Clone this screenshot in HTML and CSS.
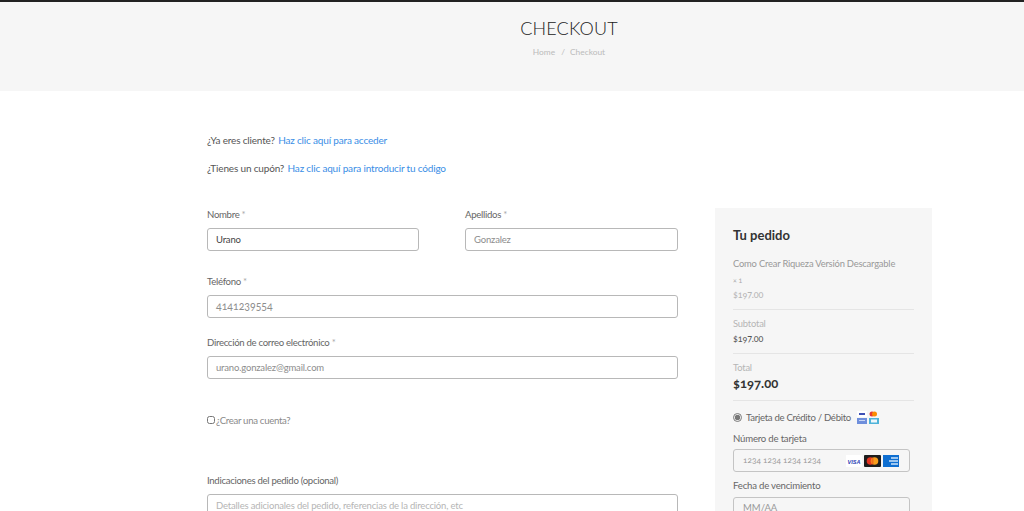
FILE: index.html
```html
<!DOCTYPE html>
<html lang="es">
<head>
<meta charset="utf-8">
<title>Checkout</title>
<link rel="stylesheet" href="styles.css">
</head>
<body>
<header class="hero">
  <h1 class="hero-title">CHECKOUT</h1>
  <nav class="crumbs"><span>Home</span><span class="crumb-sep">/</span><span>Checkout</span></nav>
</header>
<main class="page">
  <p class="notice notice-first">¿Ya eres cliente? <a href="#">Haz clic aquí para acceder</a></p>
  <p class="notice notice-second">¿Tienes un cupón? <a href="#">Haz clic aquí para introducir tu código</a></p>
  <div class="columns">
    <form class="billing">
      <div class="row row-names">
        <div class="field">
          <label class="label">Nombre <span class="req">*</span></label>
          <div class="input input-filled">Urano</div>
        </div>
        <div class="field">
          <label class="label">Apellidos <span class="req">*</span></label>
          <div class="input">Gonzalez</div>
        </div>
      </div>
      <div class="field field-phone">
        <label class="label">Teléfono <span class="req">*</span></label>
        <div class="input input-phone">4141239554</div>
      </div>
      <div class="field field-email">
        <label class="label">Dirección de correo electrónico <span class="req">*</span></label>
        <div class="input">urano.gonzalez@gmail.com</div>
      </div>
      <label class="account"><input type="checkbox" class="account-check"><span>¿Crear una cuenta?</span></label>
      <div class="field field-notes">
        <label class="label">Indicaciones del pedido (opcional)</label>
        <div class="input input-notes">Detalles adicionales del pedido, referencias de la dirección, etc</div>
      </div>
    </form>
    <aside class="order">
      <h2 class="order-title">Tu pedido</h2>
      <div class="order-item">Como Crear Riqueza Versión Descargable</div>
      <div class="order-qty">× 1</div>
      <div class="order-price">$197.00</div>
      <div class="order-block">
        <div class="order-key">Subtotal</div>
        <div class="order-sub">$197.00</div>
      </div>
      <div class="order-block">
        <div class="order-key">Total</div>
        <div class="order-total">$197.00</div>
      </div>
      <div class="pay">
        <div class="pay-method">
          <input type="radio" class="pay-radio" checked>
          <span>Tarjeta de Crédito / Débito</span>
          <svg class="pay-icons" width="22" height="13" viewBox="0 0 22 13">
            <rect x="0" y="0" width="10" height="6" fill="#fff"/>
            <rect x="2" y="2" width="6" height="2" fill="#3f51b5"/>
            <circle cx="15" cy="3" r="2.500" fill="#e53935"/>
            <circle cx="17.500" cy="3" r="2.500" fill="#fb8c00"/>
            <rect x="0" y="7" width="10" height="6" fill="#6f8fdc"/>
            <rect x="2" y="9" width="6" height="1" fill="#c9d6f5"/>
            <rect x="12" y="7" width="10" height="6" fill="#4fb3d9"/>
            <rect x="14" y="8.500" width="6" height="3" fill="#eef7fb"/>
          </svg>
        </div>
        <div class="pay-label">Número de tarjeta</div>
        <div class="pay-input pay-card">
          <span class="pay-digits">1234 1234 1234 1234</span>
          <span class="cards">
            <svg width="16" height="12" viewBox="0 0 16 12"><rect width="16" height="12" fill="#fff"/><text x="8" y="8.500" class="visa">VISA</text></svg>
            <svg width="17" height="12" viewBox="0 0 17 12"><rect width="17" height="12" rx="1" fill="#1d1d1d"/><circle cx="6.500" cy="6" r="3.800" fill="#e53420"/><circle cx="10.500" cy="6" r="3.800" fill="#f79e1b"/><rect x="7.500" y="3" width="2" height="6" fill="#f26a1b"/></svg>
            <svg width="16" height="12" viewBox="0 0 16 12"><rect width="16" height="12" fill="#0f6fd1"/><rect x="8" y="2" width="7" height="2" fill="#9cc6ef"/><rect x="6" y="5" width="9" height="2" fill="#9cc6ef"/><rect x="8" y="8" width="7" height="2" fill="#9cc6ef"/></svg>
          </span>
        </div>
        <div class="pay-label pay-label-next">Fecha de vencimiento</div>
        <div class="pay-input pay-input-next">MM/AA</div>
      </div>
    </aside>
  </div>
</main>
</body>
</html>
```
FILE: styles.css
```css
* { box-sizing: border-box; }
html, body { height: 511px; overflow: hidden; }
body {
  margin: 0;
  background: #fff;
  color: #555;
  font-family: "Lato", "Open Sans", sans-serif;
  font-size: 10px;
  font-variant-numeric: oldstyle-nums;
}
.hero {
  height: 91px;
  background: #f6f6f6;
  border-top: 2px solid #222;
  padding: 15px 0 0 114px;
  text-align: center;
}
.hero-title {
  margin: 0;
  font-size: 18px;
  line-height: 22px;
  font-weight: 300;
  color: #222;
  letter-spacing: 0.15px;
}
.crumbs {
  margin-top: 7px;
  font-size: 8.400px;
  line-height: 12px;
  color: #bbb;
}
.crumb-sep { margin: 0 5px 0 6px; }
.page { width: 725px; margin-left: 207px; }
.notice { margin: 0; font-size: 10px; line-height: 14px; color: #555; letter-spacing: -0.17px; }
.notice a { color: #3a8ee6; text-decoration: none; margin-left: 1px; }
.notice-first { padding-top: 42px; }
.notice-second { padding-top: 14px; }
.columns { display: flex; justify-content: space-between; margin-top: 33px; }
.billing { width: 471px; }
.row-names { display: grid; grid-template-columns: 212px 213px; justify-content: space-between; }
.label { display: block; font-size: 9.600px; line-height: 14px; color: #666; letter-spacing: -0.3px; }
.req { color: #aaa; }
.input {
  margin-top: 6px;
  height: 23px;
  border: 1px solid #b8b8b8;
  border-radius: 3px;
  background: #fff;
  padding: 0 8px;
  font-size: 9.500px;
  line-height: 21px;
  letter-spacing: -0.18px;
  color: #8d8d8d;
  white-space: nowrap;
}
.input-filled { color: #444; }
.input-phone { font-size: 10.500px; letter-spacing: 0; }
.input-notes { color: #b5b5b5; height: 40px; }
.field-phone { margin-top: 24px; }
.field-email { margin-top: 18px; }
.account {
  display: flex;
  align-items: center;
  margin-top: 34px;
  height: 14px;
  font-size: 9.600px;
  letter-spacing: -0.3px;
  color: #8a8a8a;
}
.account-check { width: 8px; height: 8px; margin: 0 1px 0 0; }
.field-notes { margin-top: 47px; }
.order {
  width: 217px;
  height: 320px;
  background: #f6f6f6;
  padding: 18px 18px 0;
}
.order-title { margin: 0; font-size: 13px; line-height: 18px; font-weight: 700; color: #333; }
.order-item { margin-top: 13px; font-size: 9.400px; line-height: 14px; letter-spacing: -0.2px; color: #999; }
.order-qty { margin-top: 2px; font-size: 7px; line-height: 14px; color: #aaa; }
.order-price { font-size: 9px; line-height: 16px; letter-spacing: -0.15px; color: #b5b5b5; }
.order-block { margin-top: 6px; border-top: 1px solid #e5e5e5; padding-top: 7px; }
.order-key { font-size: 9.400px; line-height: 14px; letter-spacing: -0.2px; color: #b5b5b5; }
.order-sub { margin: 1px 0 7px; font-size: 9px; line-height: 14px; letter-spacing: -0.15px; color: #555; }
.order-block + .order-block { margin-top: 0; }
.order-total { margin-top: -1px; font-size: 13px; line-height: 18px; font-weight: 700; color: #333; }
.pay { margin-top: 8px; border-top: 1px solid #e5e5e5; padding-top: 8px; }
.pay-method { display: flex; align-items: center; height: 16px; font-size: 9.600px; letter-spacing: -0.3px; color: #666; }
.pay-radio { width: 9px; height: 9px; margin: 0 4px 0 0; accent-color: #777; }
.pay-icons { margin-left: 6px; }
.pay-label { margin-top: 7px; font-size: 9.600px; line-height: 14px; letter-spacing: -0.2px; color: #666; }
.pay-label-next { margin-top: 7px; }
.pay-input {
  width: 177px;
  height: 23px;
  margin-top: 3px;
  border: 1px solid #c4c4c4;
  border-radius: 3px;
  padding: 0 9px;
  font-size: 9.500px;
  line-height: 19px;
  color: #999;
}
.pay-input-next { margin-top: 4px; }
.pay-card { display: flex; justify-content: space-between; align-items: center; padding-right: 10px; }
.pay-digits { white-space: nowrap; font-size: 8.200px; letter-spacing: 0.05px; }
.cards { display: flex; gap: 2px; }
.cards svg { display: block; }
.visa { font: italic 700 5.500px "Liberation Sans", sans-serif; fill: #2a3fb5; text-anchor: middle; }
```
